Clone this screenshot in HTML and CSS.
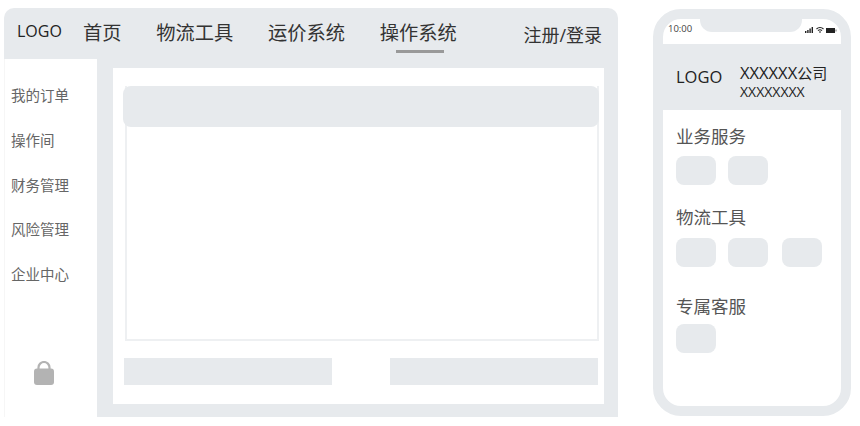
FILE: index.html
```html
<!DOCTYPE html>
<html>
  <head>
    <title>LOGO</title>
    <link rel="stylesheet" href="styles.css">
  </head>
  <body>
    <div class="desktop">
      <div class="topbar">
        <div class="logo">LOGO</div>
        <div class="nav">
          <div class="nav-item">首页</div>
          <div class="nav-item">物流工具</div>
          <div class="nav-item">运价系统</div>
          <div class="nav-item active">操作系统</div>
        </div>
        <div class="login">注册/登录</div>
      </div>
      <div class="desk-body">
        <div class="sidebar">
          <div class="menu">
            <div class="menu-item">我的订单</div>
            <div class="menu-item">操作间</div>
            <div class="menu-item">财务管理</div>
            <div class="menu-item">风险管理</div>
            <div class="menu-item">企业中心</div>
          </div>
          <svg class="lock" width="20" height="24" viewBox="0 0 20 24">
            <path d="M4.5 9V6.5a5.5 5.5 0 0 1 11 0V9" fill="none" stroke="#b3b3b3" stroke-width="2.2"/>
            <rect x="0" y="7.5" width="20" height="16.5" rx="3" fill="#b3b3b3"/>
          </svg>
        </div>
        <div class="main">
          <div class="panel">
            <div class="panel-head"></div>
            <div class="panel-box"></div>
          </div>
          <div class="bottom-bars">
            <div class="bar"></div>
            <div class="bar"></div>
          </div>
        </div>
      </div>
    </div>

    <div class="phone">
      <div class="status">
        <span class="time">10:00</span>
        <div class="notch"></div>
        <svg class="status-icons" width="32" height="8" viewBox="0 0 32 8">
          <rect x="0" y="5" width="1.4" height="2" fill="#222"/>
          <rect x="2.2" y="4" width="1.4" height="3" fill="#222"/>
          <rect x="4.4" y="2.5" width="1.4" height="4.5" fill="#222"/>
          <rect x="6.6" y="1" width="1.4" height="6" fill="#222"/>
          <path d="M11.5 3a5 5 0 0 1 7 0M13 4.6a3 3 0 0 1 4 0" fill="none" stroke="#222" stroke-width="1.1"/>
          <path d="M14 6l1-1 1 1-1 1z" fill="#222"/>
          <rect x="21" y="2" width="9" height="5" fill="#222"/>
          <rect x="30.5" y="3.5" width="1" height="2" fill="#777"/>
        </svg>
      </div>
      <div class="phone-head">
        <div class="logo phone-logo">LOGO</div>
        <div class="company">
          <div class="company-name"><span class="company-x">XXXXXX</span>公司</div>
          <div>XXXXXXXX</div>
        </div>
      </div>
      <div class="phone-body">
        <div class="section">
          <div class="section-title">业务服务</div>
          <div class="tiles">
            <div class="tile"></div>
            <div class="tile"></div>
          </div>
        </div>
        <div class="section section-tools">
          <div class="section-title">物流工具</div>
          <div class="tiles">
            <div class="tile"></div>
            <div class="tile"></div>
            <div class="tile tile-last"></div>
          </div>
        </div>
        <div class="section section-service">
          <div class="section-title">专属客服</div>
          <div class="tiles">
            <div class="tile"></div>
          </div>
        </div>
      </div>
    </div>
  </body>
</html>
```

FILE: styles.css
```css
body {
  margin: 0;
  width: 860px;
  height: 426px;
  overflow: hidden;
  background-color: #fff;
  display: flex;
  align-items: flex-start;
  font-family: "Open Sans", "Noto Sans CJK SC", sans-serif;
  color: #333;
}

.desktop {
  width: 614px;
  height: 409px;
  margin: 8px 0 0 4px;
  background-color: #e7eaed;
  border-radius: 10px 10px 0 0;
  display: flex;
  flex-direction: column;
}

.topbar {
  height: 51px;
  display: flex;
  align-items: flex-start;
}

.logo {
  font-size: 16px;
  color: #222;
  line-height: 22px;
}

.topbar .logo {
  margin: 12px 0 0 13px;
  width: 66px;
}

.nav {
  display: flex;
  gap: 34.75px;
  margin-top: 11px;
}

.nav-item {
  font-size: 19.25px;
  line-height: 28px;
  height: 34px;
  color: #333;
}

.active {
  position: relative;
}

.active::after {
  content: "";
  position: absolute;
  left: 16px;
  bottom: 0;
  width: 48px;
  height: 3px;
  background-color: #999;
}

.login {
  font-size: 18px;
  line-height: 28px;
  margin: 13px 0 0 auto;
  padding-right: 16px;
  color: #333;
}

.desk-body {
  flex: 1;
  display: flex;
}

.sidebar {
  width: 93px;
  background-color: #fff;
  display: flex;
  flex-direction: column;
  align-items: flex-start;
  border-left: 1px solid #f6f6f6;
  box-sizing: border-box;
}

.menu {
  width: 100%;
  padding: 26px 0 0 6px;
  box-sizing: border-box;
}

.menu-item {
  font-size: 14.5px;
  line-height: 21px;
  margin-bottom: 23.75px;
  color: #666;
}

.lock {
  margin: 52px 0 0 29px;
}

.main {
  width: 491px;
  height: 336px;
  margin: 9px 0 0 16px;
  background-color: #fff;
  padding: 18px 5px 0 10px;
  box-sizing: border-box;
}

.panel {
  position: relative;
  height: 255px;
}

.panel-head {
  position: relative;
  z-index: 1;
  height: 41px;
  background-color: #e7eaed;
  border-radius: 8px;
}

.panel-box {
  position: absolute;
  top: 0;
  left: 2px;
  right: 0;
  bottom: 0;
  border: 2px solid #eef0f2;
  border-top: 0;
}

.bottom-bars {
  display: flex;
  justify-content: space-between;
  margin: 17px 1px 0 1px;
}

.bar {
  width: 208px;
  height: 27px;
  background-color: #e7eaed;
}

.phone {
  width: 178px;
  height: 387px;
  margin: 9px 0 0 35px;
  border: 10px solid #e7eaed;
  border-radius: 28px;
  background-color: #fff;
  display: flex;
  flex-direction: column;
}

.status {
  position: relative;
  height: 25px;
  flex-shrink: 0;
}

.time {
  position: absolute;
  left: 5px;
  top: 4px;
  font-size: 9.5px;
  line-height: 12px;
  color: #444;
}

.notch {
  position: absolute;
  left: 37px;
  top: 0;
  width: 102px;
  height: 13px;
  background-color: #e7eaed;
  border-radius: 0 0 12px 12px;
}

.status-icons {
  position: absolute;
  left: 142px;
  top: 7px;
}

.phone-head {
  height: 66px;
  flex-shrink: 0;
  background-color: #e7eaed;
  display: flex;
  align-items: center;
}

.phone-logo {
  font-size: 16.5px;
  margin: 0 0 0 13px;
  width: 64px;
}

.company {
  font-size: 14px;
  line-height: 17px;
  color: #222;
  margin-top: 10px;
}

.company-name {
  font-size: 15px;
  height: 18px;
  line-height: 16px;
}

.company-x {
  font-size: 16.5px;
}

.phone-body {
  padding: 14px 0 0 13px;
}

.section-tools {
  margin-top: 20px;
}

.section-service {
  margin-top: 27px;
}

.section-title {
  font-size: 17.5px;
  line-height: 24px;
  color: #555;
  margin-bottom: 8px;
}

.section-tools .section-title {
  margin-bottom: 9px;
}

.section-service .section-title {
  margin-bottom: 6px;
}

.tiles {
  display: flex;
  gap: 12px;
}

.tile {
  width: 40px;
  height: 29px;
  background-color: #e7eaed;
  border-radius: 8px;
}

.tile-last {
  margin-left: 2px;
}
```
